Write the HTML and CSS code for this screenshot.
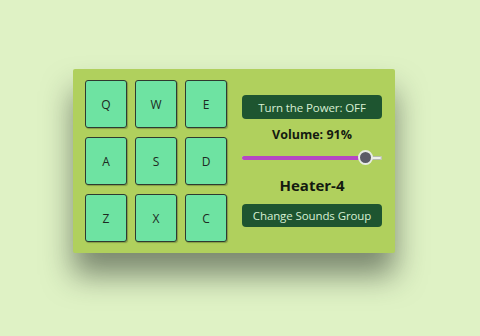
FILE: index.html
```html
<!DOCTYPE html>
<html>
<head>
<meta charset="utf-8">
<link rel="stylesheet" href="styles.css">
</head>
<body>
<div class="machine">
  <div class="pads">
    <div class="pad">Q</div>
    <div class="pad">W</div>
    <div class="pad">E</div>
    <div class="pad">A</div>
    <div class="pad">S</div>
    <div class="pad">D</div>
    <div class="pad">Z</div>
    <div class="pad">X</div>
    <div class="pad">C</div>
  </div>
  <div class="controls">
    <div class="btn">Turn the Power: OFF</div>
    <div class="volume">Volume: 91%</div>
    <div class="slider">
      <div class="track"><div class="fill" style="width: 88%"></div></div>
      <div class="thumb" style="left: 88%"></div>
    </div>
    <div class="display">Heater-4</div>
    <div class="btn">Change Sounds Group</div>
  </div>
</div>
</body>
</html>
```
FILE: styles.css
```css
html, body {
  margin: 0;
  padding: 0;
}
body {
  width: 480px;
  height: 336px;
  background: #dff2c5;
  font-family: "Open Sans", "DejaVu Sans", sans-serif;
  overflow: hidden;
}
.machine {
  margin: 69px 0 0 73px;
  width: 322px;
  height: 184px;
  box-sizing: border-box;
  padding: 11px 13px 11px 12px;
  background: #b0d05d;
  border-radius: 2px;
  box-shadow: 0 22px 30px rgba(40, 50, 40, 0.55);
  display: flex;
  gap: 15px;
}
.pads {
  display: grid;
  grid-template-columns: repeat(3, 42px);
  grid-template-rows: repeat(3, 48px);
  column-gap: 8px;
  row-gap: 9px;
}
.pad {
  box-sizing: border-box;
  background: #6ee3a2;
  border: 1px solid #2e3a30;
  border-radius: 3px;
  box-shadow: 1px 1px 1px rgba(0,0,0,0.25);
  display: flex;
  align-items: center;
  justify-content: center;
  font-size: 12px;
  color: #1d2a22;
}
.controls {
  width: 140px;
  display: flex;
  flex-direction: column;
  align-items: center;
  justify-content: center;
}
.btn {
  width: 140px;
  height: 24px;
  flex-shrink: 0;
  box-sizing: border-box;
  background: #1e5530;
  color: #d7efd3;
  border-radius: 4px;
  font-size: 11.5px;
  display: flex;
  align-items: center;
  justify-content: center;
  letter-spacing: -0.1px;
}
.btn + .btn, .display + .btn {
  height: 23px;
}
.volume {
  margin-top: 7px;
  font-size: 12.5px;
  font-weight: 700;
  color: #141a10;
  line-height: 18px;
}
.slider {
  position: relative;
  width: 140px;
  height: 16px;
  margin-top: 6px;
  flex-shrink: 0;
}
.track {
  position: absolute;
  left: 0;
  right: 0;
  top: 6px;
  height: 4px;
  background: #eef0ea;
  border-radius: 2px;
  box-shadow: inset 0 0 0 1px #b7bbb0;
}
.fill {
  height: 4px;
  background: #b547c4;
  border-radius: 2px;
}
.thumb {
  position: absolute;
  top: 0;
  width: 15px;
  height: 15px;
  margin-left: -7px;
  box-sizing: border-box;
  background: #5b5b66;
  border: 2px solid #e8ece4;
  border-radius: 50%;
}
.display {
  margin-top: 9px;
  margin-bottom: 9px;
  font-size: 15px;
  font-weight: 700;
  color: #141a10;
  line-height: 20px;
}
```
